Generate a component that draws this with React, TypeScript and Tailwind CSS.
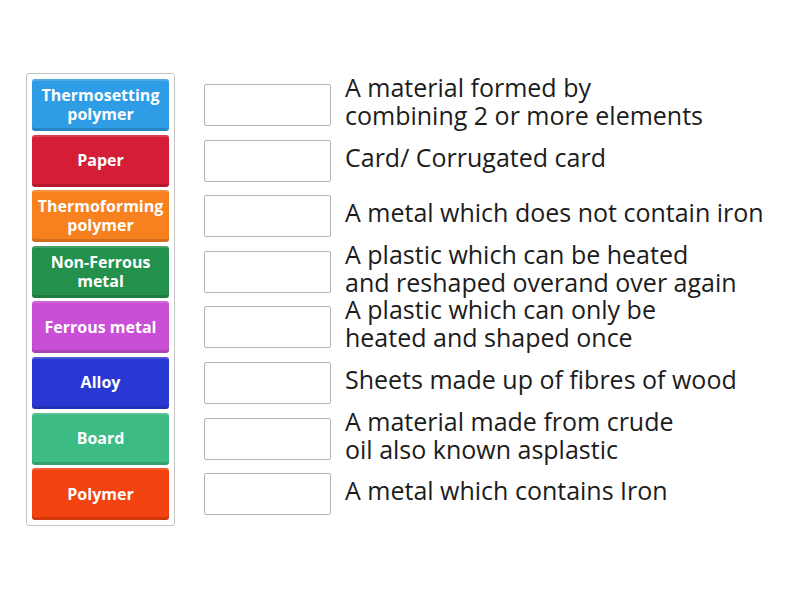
import React from "react";

const tiles: { label: string; cls: string }[] = [
  { label: "Thermosetting polymer", cls: "bg-[#2f9de6]" },
  { label: "Paper", cls: "bg-[#d41e36]" },
  { label: "Thermoforming polymer", cls: "bg-[#f7801f]" },
  { label: "Non-Ferrous metal", cls: "bg-[#23904b]" },
  { label: "Ferrous metal", cls: "bg-[#c84fd6]" },
  { label: "Alloy", cls: "bg-[#2a38d3]" },
  { label: "Board", cls: "bg-[#3dbb84]" },
  { label: "Polymer", cls: "bg-[#f24310]" },
];

const defs: string[][] = [
  ["A material formed by", "combining 2 or more elements"],
  ["Card/ Corrugated card"],
  ["A metal which does not contain iron"],
  ["A plastic which can be heated", "and reshaped overand over again"],
  ["A plastic which can only be", "heated and shaped once"],
  ["Sheets made up of fibres of wood"],
  ["A material made from crude", "oil also known asplastic"],
  ["A metal which contains Iron"],
];

export default function App() {
  return (
    <div
      className="w-[800px] h-[600px] bg-white flex items-start pt-[73px] pl-[26px] overflow-hidden"
      style={{ fontFamily: '"Open Sans", "Liberation Sans", sans-serif' }}
    >
      <div className="w-[149px] shrink-0 border border-[#c4c4c4] rounded-[3px] p-[5px] flex flex-col gap-[3.6px]">
        {tiles.map((t) => (
          <div
            key={t.label}
            className={`${t.cls} h-[52px] rounded-[3px] flex items-center justify-center text-center text-white font-bold text-[16px] leading-[19px] px-0.5 shadow-[inset_0_-3px_0_rgba(0,0,0,0.14),inset_0_2px_0_rgba(255,255,255,0.14)]`}
          >
            {t.label}
          </div>
        ))}
      </div>
      <div className="ml-[29px] pt-[5px] flex flex-col gap-[3.6px]">
        {defs.map((d, i) => (
          <div key={i} className="h-[52px] flex items-center">
            <div className="w-[127px] h-[42px] mt-[2px] shrink-0 border border-[#b5b5b5] rounded-[2px] bg-white" />
            <div className="ml-[14px] pb-[6px] text-[25px] leading-[28px] text-[#1c1c1c] whitespace-nowrap">
              {d.map((l, j) => (
                <div key={j}>{l}</div>
              ))}
            </div>
          </div>
        ))}
      </div>
    </div>
  );
}
